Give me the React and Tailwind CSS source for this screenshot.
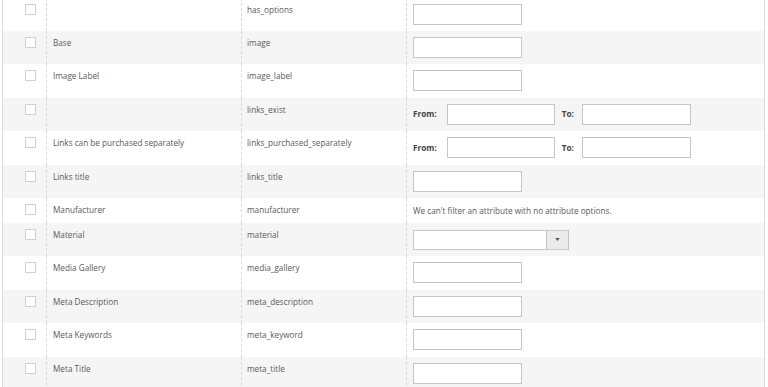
import React from 'react';

const rows = [
  { label: '', code: 'has_options', kind: 'text' },
  { label: 'Base', code: 'image', kind: 'text' },
  { label: 'Image Label', code: 'image_label', kind: 'text' },
  { label: '', code: 'links_exist', kind: 'range' },
  { label: 'Links can be purchased separately', code: 'links_purchased_separately', kind: 'range' },
  { label: 'Links title', code: 'links_title', kind: 'text' },
  { label: 'Manufacturer', code: 'manufacturer', kind: 'note' },
  { label: 'Material', code: 'material', kind: 'select' },
  { label: 'Media Gallery', code: 'media_gallery', kind: 'text' },
  { label: 'Meta Description', code: 'meta_description', kind: 'text' },
  { label: 'Meta Keywords', code: 'meta_keyword', kind: 'text' },
  { label: 'Meta Title', code: 'meta_title', kind: 'text' },
];

function Field({ kind }) {
  if (kind === 'range') {
    return (
      <div className="flex items-center pt-[6px]">
        <span className="font-bold text-[8.2px] text-[#444]">From:</span>
        <input className="ml-[10px] h-[21px] w-[108px] border border-[#c6c6c6] bg-white" />
        <span className="ml-[7px] font-bold text-[8.2px] text-[#444]">To:</span>
        <input className="ml-[8px] h-[21px] w-[109px] border border-[#c6c6c6] bg-white" />
      </div>
    );
  }
  if (kind === 'note') {
    return <p className="pt-[7px] text-[8.2px] leading-[11px]">We can't filter an attribute with no attribute options.</p>;
  }
  if (kind === 'select') {
    return (
      <div className="mt-[7px] flex h-[20px] w-[156px] border border-[#c6c6c6] bg-white">
        <div className="flex-1" />
        <div className="flex w-[22px] items-center justify-center border-l border-[#c6c6c6] bg-[#ebebeb]">
          <svg width="5" height="3" viewBox="0 0 6 4">
            <path d="M0 0H6L3 4Z" fill="#555" />
          </svg>
        </div>
      </div>
    );
  }
  return <input className="mt-[6px] h-[21px] w-[109px] border border-[#c6c6c6] bg-white" />;
}

export default function App() {
  return (
    <div className="h-[387px] w-[768px] overflow-hidden bg-white font-['Open_Sans',sans-serif] text-[#5a5a5a]">
      <div className="ml-[2px] mt-[-2.4px] w-[763px] border-l border-r border-[#dadada]">
        {rows.map((row, i) => (
          <div
            key={row.code}
            className={`grid grid-cols-[43px_195px_165px_1fr] ${row.kind === 'note' ? 'h-[25px]' : 'h-[33.4px]'} ${i % 2 === 1 ? 'bg-[#f5f5f5]' : 'bg-white'}`}
          >
            <div className="pl-[22px] pt-[6px]">
              <div className="h-[11px] w-[11px] border border-[#d0d0d0] bg-white" />
            </div>
            <div className="border-l border-dashed border-[#d9d9d9] pl-[6px] pt-[6px] text-[8.2px] leading-[11px]">{row.label}</div>
            <div className="border-l border-dashed border-[#d9d9d9] pl-[5px] pt-[6px] text-[8.2px] leading-[11px]">{row.code}</div>
            <div className="border-l border-dashed border-[#d9d9d9] pl-[6px]">
              <Field kind={row.kind} />
            </div>
          </div>
        ))}
      </div>
    </div>
  );
}
